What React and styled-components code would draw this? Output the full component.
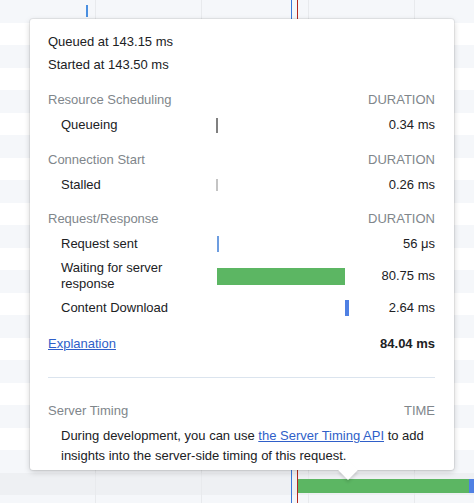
import React from "react";
import styled, { createGlobalStyle } from "styled-components";

const GlobalStyle = createGlobalStyle`
  html, body {
    margin: 0;
    padding: 0;
    background: #ffffff;
  }
  body {
    font-family: "Liberation Sans", Arial, Helvetica, sans-serif;
    font-size: 13px;
    color: #202124;
  }
`;

const ROW_H = 22.5;

const Waterfall = styled.div`
  position: relative;
  width: 474px;
  height: 503px;
  overflow: hidden;
`;

const Rows = styled.div`
  display: flex;
  flex-direction: column;
`;

const StripeRow = styled.div`
  height: ${ROW_H}px;
  flex: none;
  background: ${props => props.selected ? "#eef0f3" : props.odd ? "#ffffff" : "#f5f7fa"};
`;

const GridLine = styled.div`
  position: absolute;
  top: 0;
  bottom: 0;
  width: 1px;
  background: ${props => props.color || "#e8eaed"};
`;

const Tick = styled.div`
  position: absolute;
  left: 86px;
  top: 5px;
  width: 2px;
  height: 12px;
  background: #4a8fe0;
`;

const TimelineBar = styled.div`
  position: absolute;
  left: 298px;
  top: 479px;
  height: 14px;
  width: 176px;
  display: flex;
`;

const BarPart = styled.div`
  height: 100%;
  background: ${props => props.color};
  flex: ${props => props.grow ? 1 : "none"};
  width: ${props => props.w ? props.w + "px" : "auto"};
`;

const Popup = styled.div`
  position: absolute;
  left: 30px;
  top: 19px;
  width: 424px;
  box-sizing: border-box;
  padding: 11px 19px 4px 18px;
  background: #ffffff;
  border-radius: 3px;
  box-shadow: 0 0 0 1px rgba(0, 0, 0, 0.06), 0 2px 6px rgba(0, 0, 0, 0.18);
  display: flex;
  flex-direction: column;
`;

const Arrow = styled.div`
  position: absolute;
  left: 311px;
  bottom: -7px;
  width: 14px;
  height: 14px;
  background: #ffffff;
  transform: rotate(45deg);
  box-shadow: 2px 2px 3px rgba(0, 0, 0, 0.12);
`;

const StampLine = styled.div`
  height: 23px;
  line-height: 23px;
  white-space: nowrap;
`;

const Grid = styled.div`
  display: grid;
  grid-template-columns: 169px 133px 1fr;
  align-items: center;
`;

const SectionHead = styled.div`
  display: contents;
  & > div {
    margin-top: ${props => props.first ? 12 : 9.5}px;
    height: 24px;
    line-height: 24px;
    color: #80868b;
  }
`;

const Cell = styled.div`
  padding-left: ${props => props.indent ? 13 : 0}px;
  text-align: ${props => props.right ? "right" : "left"};
  line-height: 16px;
  padding-top: ${props => props.tall ? 3 : 5}px;
  padding-bottom: ${props => props.tall ? 3 : 5}px;
`;

const BarTrack = styled.div`
  position: relative;
  height: ${props => props.h}px;
`;

const Bar = styled.div`
  position: absolute;
  top: 0;
  bottom: 0;
  background: ${props => props.color};
`;

const Link = styled.a`
  color: #2f5fc9;
  text-decoration: underline;
  cursor: pointer;
`;

const FooterRow = styled.div`
  display: flex;
  justify-content: space-between;
  align-items: center;
  height: 24px;
  margin-top: 10px;
`;

const Total = styled.div`
  font-weight: 700;
`;

const Divider = styled.div`
  height: 1px;
  background: #dbe4ee;
  margin-top: 22px;
`;

const ServerHead = styled.div`
  display: flex;
  justify-content: space-between;
  height: 24px;
  line-height: 24px;
  margin-top: 21px;
  color: #80868b;
`;

const Note = styled.div`
  margin: 3px 0 0 13px;
  line-height: 20px;
`;

const NoteLine = styled.div`
  white-space: nowrap;
`;

const sections = [
  {
    title: "Resource Scheduling",
    rows: [{ label: "Queueing", value: "0.34 ms", left: -1, width: 2, color: "#808080", h: 15 }],
  },
  {
    title: "Connection Start",
    rows: [{ label: "Stalled", value: "0.26 ms", left: -1, width: 1.5, color: "#c4c4c4", h: 12 }],
  },
  {
    title: "Request/Response",
    rows: [
      { label: "Request sent", value: "56 μs", left: 0, width: 1.5, color: "#6d9de0", h: 16 },
      { label: "Waiting for server response", value: "80.75 ms", left: 0, width: 128, color: "#5cb663", h: 17, tall: true },
      { label: "Content Download", value: "2.64 ms", left: 128, width: 4, color: "#4f80e3", h: 16 },
    ],
  },
];

function TimingTable() {
  return (
    <Grid>
      {sections.map((s, si) => (
        <React.Fragment key={s.title}>
          <SectionHead first={si === 0}>
            <div>{s.title}</div>
            <div />
            <div style={{ textAlign: "right" }}>DURATION</div>
          </SectionHead>
          {s.rows.map(r => (
            <React.Fragment key={r.label}>
              <Cell indent tall={r.tall}>
                {r.tall ? <>Waiting for server<br />response</> : r.label}
              </Cell>
              <BarTrack h={r.h}>
                <Bar color={r.color} style={{ left: r.left, width: r.width }} />
              </BarTrack>
              <Cell right tall={r.tall}>{r.value}</Cell>
            </React.Fragment>
          ))}
        </React.Fragment>
      ))}
    </Grid>
  );
}

export default function App() {
  const stripes = Array.from({ length: 23 }, (_, i) => i);
  return (
    <>
      <GlobalStyle />
      <Waterfall>
        <Rows>
          {stripes.map(i => (
            <StripeRow key={i} odd={i % 2 === 1} selected={i === 21} />
          ))}
        </Rows>
        <GridLine style={{ left: 95 }} />
        <GridLine style={{ left: 201 }} />
        <GridLine style={{ left: 308 }} />
        <GridLine style={{ left: 414 }} />
        <GridLine color="#3b78d8" style={{ left: 291 }} />
        <GridLine color="#b3261e" style={{ left: 297 }} />
        <Tick />
        <TimelineBar>
          <BarPart grow color="#5cb663" />
          <BarPart w={5} color="#4f80e3" />
        </TimelineBar>

        <Popup>
          <StampLine>Queued at 143.15 ms</StampLine>
          <StampLine>Started at 143.50 ms</StampLine>
          <TimingTable />
          <FooterRow>
            <Link>Explanation</Link>
            <Total>84.04 ms</Total>
          </FooterRow>
          <Divider />
          <ServerHead>
            <span>Server Timing</span>
            <span>TIME</span>
          </ServerHead>
          <Note>
            <NoteLine>
              During development, you can use <Link>the Server Timing API</Link> to add
            </NoteLine>
            <NoteLine>insights into the server-side timing of this request.</NoteLine>
          </Note>
          <Arrow />
        </Popup>
      </Waterfall>
    </>
  );
}
